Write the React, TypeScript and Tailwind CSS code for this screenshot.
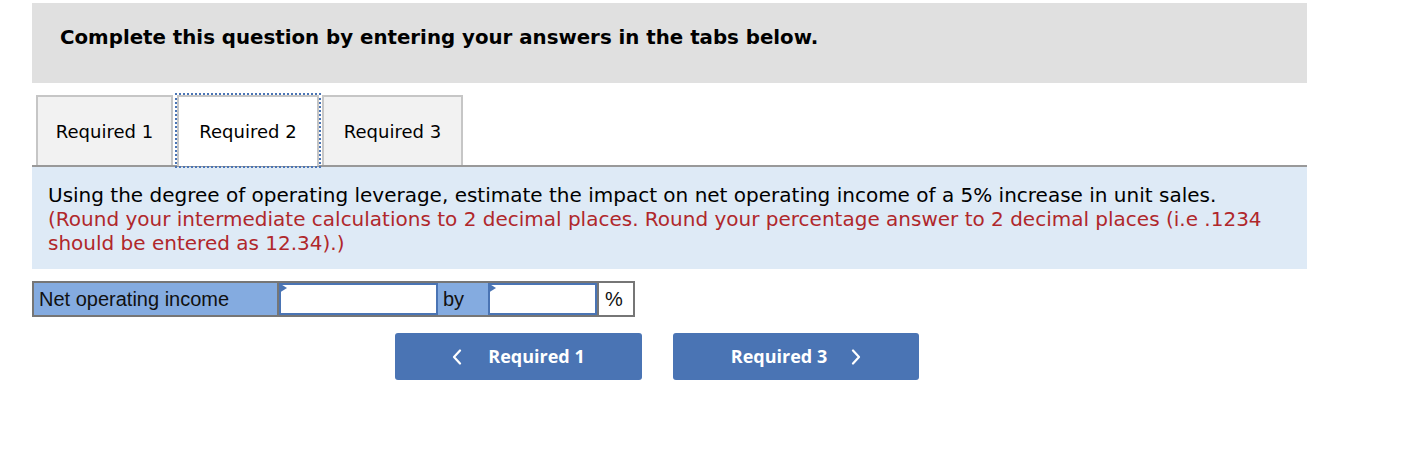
import React, { useState } from "react";

const tabs = ["Required 1", "Required 2", "Required 3"];

const Chevron = ({ dir }: { dir: "left" | "right" }) => (
  <svg width="10" height="16" viewBox="0 0 10 16" fill="none">
    <path
      d={dir === "left" ? "M8 1.5 L2 8 L8 14.5" : "M2 1.5 L8 8 L2 14.5"}
      stroke="white"
      strokeWidth="2.2"
      strokeLinecap="round"
      strokeLinejoin="round"
    />
  </svg>
);

const AnswerInput = ({ width }: { width: string }) => {
  const [value, setValue] = useState("");
  return (
    <div className={`relative h-full border-y-2 border-[#767676] ${width}`}>
      <div className="relative h-full border-2 border-[#4a74b4] bg-white">
        {/* маленький треугольник в углу */}
        <span className="absolute -left-[2px] -top-[2px] h-0 w-0 border-t-[5px] border-b-[5px] border-l-[8px] border-t-transparent border-b-transparent border-l-[#4a74b4]" />
        <input
          value={value}
          onChange={(e) => setValue(e.target.value)}
          className="h-full w-full bg-transparent px-1 outline-none"
        />
      </div>
    </div>
  );
};

const App = () => {
  const [active, setActive] = useState(1);

  return (
    <div className="w-[1416px] h-[460px] bg-white pl-8 pt-[3px] font-['DejaVu_Sans',sans-serif]">
      <div className="w-[1275px]">
        <div className="h-[80px] bg-[#e0e0e0] pl-7 pt-[23px]">
          <h1 className="text-[19.8px] font-bold leading-[24px] text-black">
            Complete this question by entering your answers in the tabs below.
          </h1>
        </div>

        <div className="mt-[10px] flex items-end border-b-2 border-[#999999] pl-1">
          {tabs.map((t, i) => {
            const selected = i === active;
            const widths = ["w-[137px]", "w-[142px]", "w-[141px]"];
            const tab = (
              <button
                key={t}
                onClick={() => setActive(i)}
                className={`${widths[i]} flex items-center justify-center border-2 border-b-0 border-[#c6c6c6] text-[18px] text-black ${
                  selected ? "h-[71px] bg-white pb-[1px]" : "h-[70px] bg-[#f2f2f2] pt-[1px]"
                }`}
              >
                {t}
              </button>
            );
            if (!selected) {
              return (
                <div key={t} className={i === 0 ? "" : "ml-[1px]"}>
                  {tab}
                </div>
              );
            }
            return (
              <div
                key={t}
                className="relative z-10 ml-[2px] -mb-[3px] border-2 border-dotted border-[#4a74b4]"
              >
                {tab}
              </div>
            );
          })}
        </div>

        <div className="bg-[#deeaf6] px-4 pt-[16px] pb-[14px] text-[20px] leading-[24px]">
          <p className="text-black">
            Using the degree of operating leverage, estimate the impact on net operating income of a 5% increase in unit sales.
          </p>
          <p className="text-[#b0272b]">
            (Round your intermediate calculations to 2 decimal places. Round your percentage answer to 2 decimal places (i.e .1234 should be entered as 12.34).)
          </p>
        </div>

        <div className="mt-3 flex h-[36px] font-['Liberation_Sans',sans-serif] text-[20px] text-[#111]">
          <div className="flex w-[247px] items-center border-2 border-[#767676] bg-[#84abe0] pl-[5px]">
            Net operating income
          </div>
          <AnswerInput width="w-[159px]" />
          <div className="flex w-[50px] items-center border-y-2 border-[#767676] bg-[#84abe0] pl-[5px]">
            by
          </div>
          <AnswerInput width="w-[109px]" />
          <div className="flex w-[38px] items-center border-2 border-[#767676] bg-white pl-[6px]">
            %
          </div>
        </div>

        <div className="mt-4 flex gap-[31px] pl-[363px] font-['Open_Sans',sans-serif]">
          <button
            onClick={() => setActive(0)}
            className="flex h-[47px] w-[247px] items-center justify-center gap-[26px] rounded-[3px] bg-[#4a74b4] text-[18px] font-bold text-white"
          >
            <Chevron dir="left" />
            Required 1
          </button>
          <button
            onClick={() => setActive(2)}
            className="flex h-[47px] w-[246px] items-center justify-center gap-[24px] rounded-[3px] bg-[#4a74b4] text-[18px] font-bold text-white"
          >
            Required 3
            <Chevron dir="right" />
          </button>
        </div>
      </div>
    </div>
  );
};

export default App;
